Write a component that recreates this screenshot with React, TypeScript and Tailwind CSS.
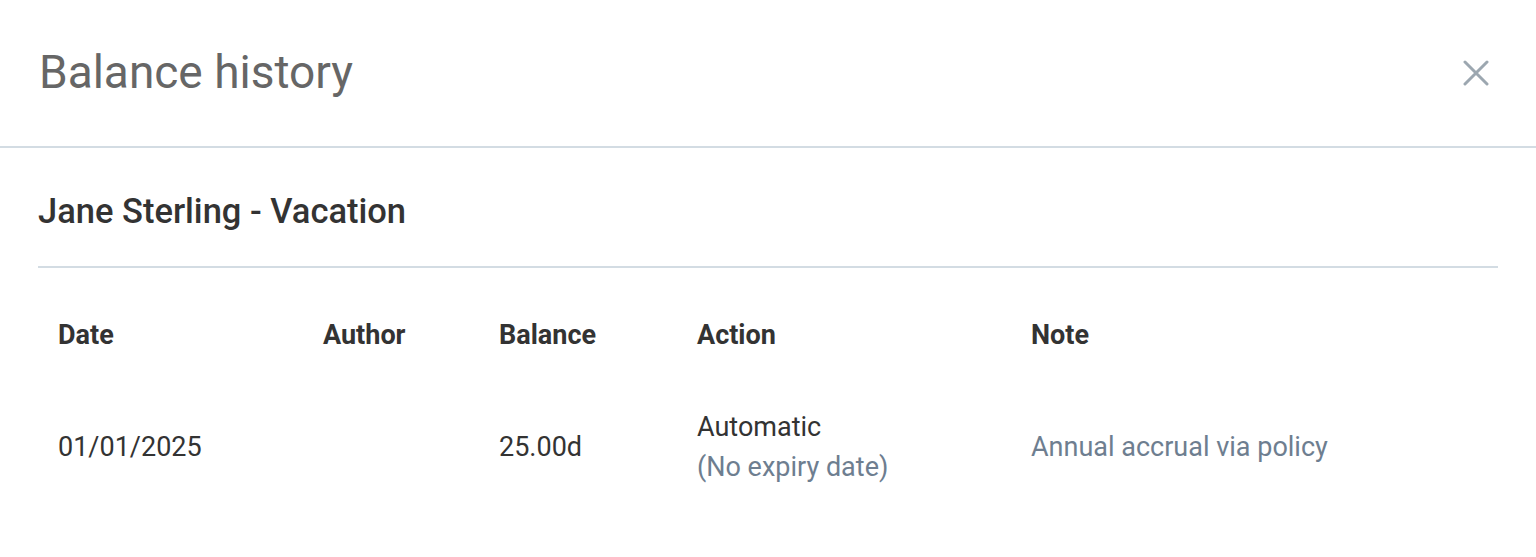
export default function App() {
  return (
    <div className="min-h-screen bg-white font-['Roboto',sans-serif]">
      <div className="flex h-[148px] items-center justify-between border-b-2 border-[#d3dce3] pl-[39px] pr-[47px]">
        <h1 className="pb-[2px] text-[46px] font-normal leading-none text-[#666666]">Balance history</h1>
        <button className="text-[#9ca7b0]">
          <svg width="26" height="26" viewBox="0 0 26 26" fill="none" stroke="currentColor" strokeWidth="3" strokeLinecap="round">
            <path d="M2 2 L24 24 M24 2 L2 24" />
          </svg>
        </button>
      </div>
      <div className="px-[38px]">
        <h2 className="flex h-[120px] items-center border-b-2 border-[#d3dce3] pt-[10px] text-[34.5px] font-medium text-[#333333]">
          Jane Sterling - Vacation
        </h2>
        <table className="w-[1461px] table-fixed border-collapse text-[27px] text-[#333333]">
          <colgroup>
            <col className="w-[265px]" />
            <col className="w-[176px]" />
            <col className="w-[198px]" />
            <col className="w-[334px]" />
            <col />
          </colgroup>
          <thead>
            <tr className="h-[133px]">
              <th className="px-[20px] pt-[2px] text-left font-bold">Date</th>
              <th className="px-[20px] pt-[2px] text-left font-bold">Author</th>
              <th className="px-[20px] pt-[2px] text-left font-bold">Balance</th>
              <th className="px-[20px] pt-[2px] text-left font-bold">Action</th>
              <th className="px-[20px] pt-[2px] text-left font-bold">Note</th>
            </tr>
          </thead>
          <tbody>
            <tr>
              <td className="px-[20px] pt-[6px] align-middle">01/01/2025</td>
              <td className="px-[20px] pt-[6px]"></td>
              <td className="px-[20px] pt-[6px]">25.00d</td>
              <td className="px-[20px] pt-[6px] leading-[40px]">
                <div>Automatic</div>
                <div className="text-[#6e7e90]">(No expiry date)</div>
              </td>
              <td className="px-[20px] pt-[6px] text-[#6e7e90]">Annual accrual via policy</td>
            </tr>
          </tbody>
        </table>
      </div>
    </div>
  );
}
